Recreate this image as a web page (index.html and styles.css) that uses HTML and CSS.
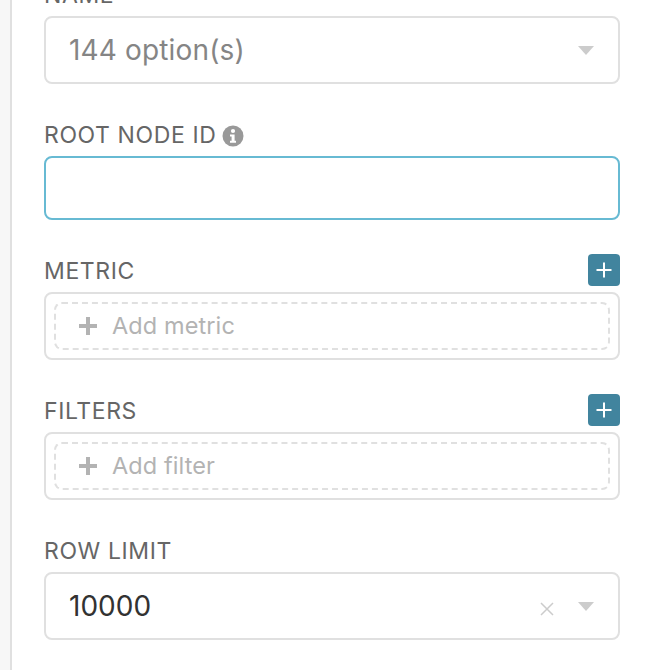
FILE: index.html
```html
<!DOCTYPE html>
<html lang="en">
<head>
    <meta charset="UTF-8">
    <meta name="viewport" content="width=device-width, initial-scale=1.0">
    <title>Chart controls</title>
    <link rel="stylesheet" href="styles.css">
</head>
<body>
    <div class="panel">
        <aside class="gutter"></aside>

        <form class="controls">
            <div class="field">
                <div class="field-label"><label>NAME</label></div>
                <div class="select-box">
                    <span class="select-value placeholder">144 option(s)</span>
                    <span class="caret"></span>
                </div>
            </div>

            <div class="field">
                <div class="field-label">
                    <label>ROOT NODE ID</label>
                    <svg class="info-icon" viewBox="0 0 22 22" width="22" height="22">
                        <circle cx="11" cy="11" r="10.5" fill="#999"/>
                        <circle cx="11" cy="6" r="2.1" fill="#fff"/>
                        <path d="M8 9.6h4.6v6.2H14v2H8v-2h1.6v-4.2H8z" fill="#fff"/>
                    </svg>
                </div>
                <input class="text-input" type="text">
            </div>

            <div class="field">
                <div class="field-label">
                    <label>METRIC</label>
                    <button class="add-btn" type="button">
                        <svg viewBox="0 0 32 32" width="32" height="32">
                            <path d="M16 8.5v15M8.5 16h15" stroke="#fff" stroke-width="2" fill="none"/>
                        </svg>
                    </button>
                </div>
                <div class="multi-box">
                    <div class="add-row">
                        <svg class="plus-icon" viewBox="0 0 20 20" width="20" height="20">
                            <path d="M10 1v18M1 10h18" stroke="#b3b3b3" stroke-width="4" fill="none"/>
                        </svg>
                        <span>Add metric</span>
                    </div>
                </div>
            </div>

            <div class="field">
                <div class="field-label">
                    <label>FILTERS</label>
                    <button class="add-btn" type="button">
                        <svg viewBox="0 0 32 32" width="32" height="32">
                            <path d="M16 8.5v15M8.5 16h15" stroke="#fff" stroke-width="2" fill="none"/>
                        </svg>
                    </button>
                </div>
                <div class="multi-box">
                    <div class="add-row">
                        <svg class="plus-icon" viewBox="0 0 20 20" width="20" height="20">
                            <path d="M10 1v18M1 10h18" stroke="#b3b3b3" stroke-width="4" fill="none"/>
                        </svg>
                        <span>Add filter</span>
                    </div>
                </div>
            </div>

            <div class="field">
                <div class="field-label"><label>ROW LIMIT</label></div>
                <div class="select-box">
                    <span class="select-value">10000</span>
                    <svg class="clear-icon" viewBox="0 0 14 14" width="14" height="14">
                        <path d="M1 1l12 12M13 1L1 13" stroke="#ccc" stroke-width="1.5" fill="none"/>
                    </svg>
                    <span class="caret"></span>
                </div>
            </div>
        </form>
    </div>
</body>
</html>
```

FILE: styles.css
```css
html, body {
    height: 100%;
}

body {
    margin: 0;
    overflow: hidden;
    background-color: #fff;
    font-family: "Inter", "Liberation Sans", sans-serif;
    color: #323232;
}

.panel {
    display: flex;
    height: 100%;
}

.gutter {
    width: 10px;
    flex: none;
    background-color: #f7f7f7;
    border-right: 2px solid #e0e0e0;
}

.controls {
    width: 576px;
    margin-top: -24px;
    margin-left: 32px;
}

.field {
    margin-bottom: 32px;
}

.field-label {
    display: flex;
    align-items: center;
    height: 36px;
    margin-bottom: 4px;
    font-size: 23px;
    letter-spacing: 0.6px;
    color: #666;
}

.field-label label {
    padding-top: 2px;
}

.info-icon {
    margin-top: 3px;
    margin-left: 6px;
}

.add-btn {
    width: 32px;
    height: 32px;
    margin-left: auto;
    padding: 0;
    border: none;
    border-radius: 4px;
    background-color: #41849e;
    cursor: pointer;
}

.add-btn svg {
    display: block;
}

.select-box {
    display: flex;
    align-items: center;
    box-sizing: border-box;
    height: 68px;
    padding: 0 24px 0 23px;
    border: 2px solid #e0e0e0;
    border-radius: 8px;
    background-color: #fff;
}

.select-value {
    flex: 1;
    font-size: 28px;
}

.placeholder {
    color: #858585;
    letter-spacing: 0.15px;
}

.caret {
    width: 0;
    height: 0;
    border-left: 8.5px solid transparent;
    border-right: 8.5px solid transparent;
    border-top: 9px solid #ccc;
}

.clear-icon {
    margin-right: 24px;
    margin-top: 5px;
}

.text-input {
    display: block;
    box-sizing: border-box;
    width: 100%;
    height: 64px;
    border: 2px solid #67bad3;
    border-radius: 8px;
    outline: none;
}

.multi-box {
    box-sizing: border-box;
    height: 68px;
    padding: 8px;
    border: 2px solid #e0e0e0;
    border-radius: 8px;
}

.add-row {
    display: flex;
    align-items: center;
    box-sizing: border-box;
    height: 48px;
    padding-left: 22px;
    padding-bottom: 2px;
    border: 2px dashed #e0e0e0;
    border-radius: 8px;
    font-size: 23.5px;
    letter-spacing: 0.1px;
    color: #b3b3b3;
}

.plus-icon {
    margin-top: 2px;
    margin-right: 14px;
}
```
